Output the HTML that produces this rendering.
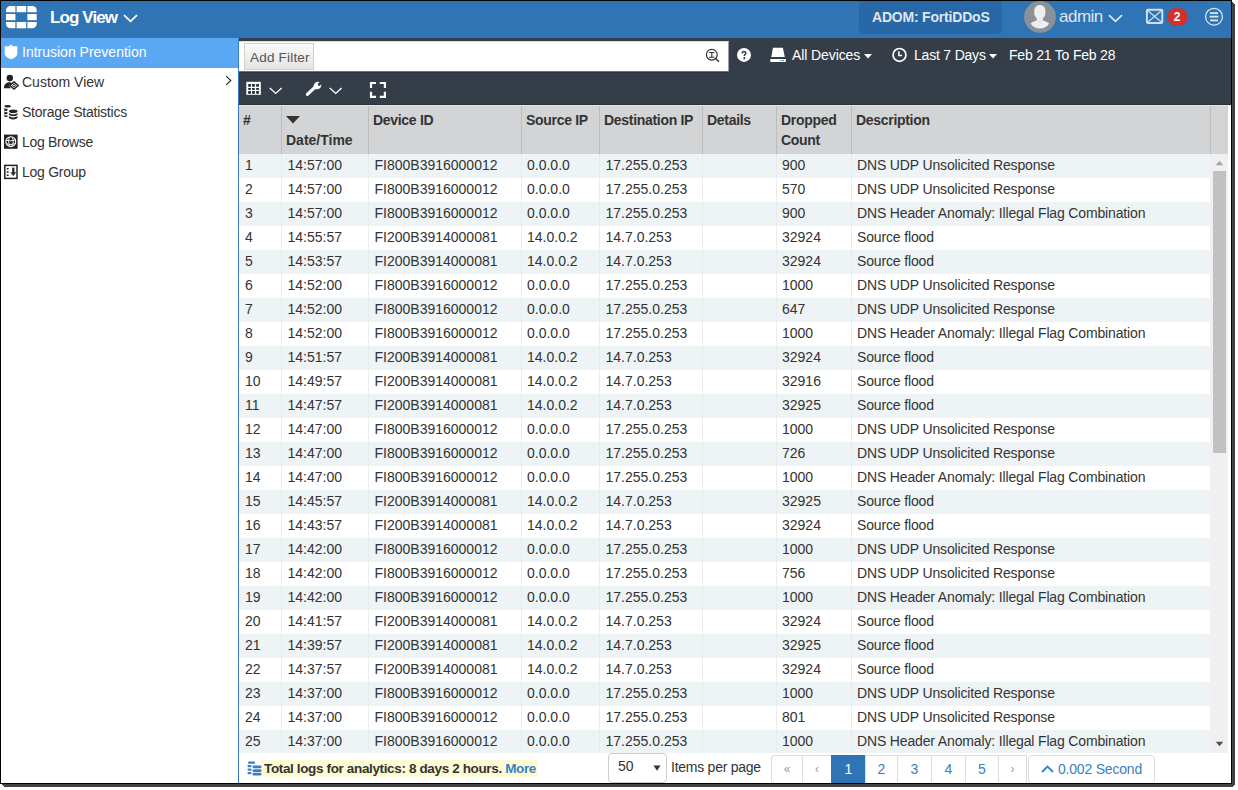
<!DOCTYPE html>
<html>
<head>
<meta charset="utf-8">
<style>
*{box-sizing:border-box;margin:0;padding:0}
html,body{width:1238px;height:790px;overflow:hidden;background:#fff;font-family:"Liberation Sans",sans-serif;color:#333;font-size:14px}
.a{position:absolute}
#shadow{position:absolute;left:3px;top:3px;width:1232px;height:784px;background:#434343}
#win{position:absolute;left:0;top:0;width:1232px;height:784px;background:#fff;overflow:hidden}
#bT,#bL,#bR,#bB{position:absolute;background:#000}
#bT{left:0;top:0;width:1232px;height:1px}
#bB{left:0;top:783px;width:1232px;height:1px}
#bL{left:0;top:0;width:1px;height:784px}
#bR{left:1231px;top:0;width:1px;height:784px}

#hdr{position:absolute;left:1px;top:1px;width:1230px;height:37px;background:#2f74b5}
.ht{position:absolute;white-space:nowrap;line-height:1}
#side{position:absolute;left:1px;top:38px;width:237px;height:745px;background:#fff}
#sideb{position:absolute;left:238px;top:38px;width:1px;height:745px;background:#3a7cc0}
.si{position:absolute;left:1px;width:237px;height:30px;white-space:nowrap}
.si span{position:absolute;left:21px;top:6px;line-height:16px;font-size:14px;color:#333}
.si svg{position:absolute}
#act{background:#5aa8f4}
#act span{color:#fff}

#tb{position:absolute;left:239px;top:38px;width:992px;height:67px;background:#353e48}
#tbl{position:absolute;left:239px;top:104px;width:992px;height:1px;background:#2a323b}
#tbw{position:absolute;left:239px;top:105px;width:992px;height:1px;background:#e4e4e4}
#inp{position:absolute;left:239px;top:41px;width:490px;height:30px;background:#fff;border-top:1px solid #d9d9d9;border-right:1px solid #9aa0a5}
#addf{position:absolute;left:244px;top:43px;width:70px;height:27px;border:1px solid #d0d0d0;border-radius:0;background:linear-gradient(#fafafa,#e4e4e4);color:#555;font-size:13.5px;letter-spacing:0.2px;line-height:27px;padding-left:5px;white-space:nowrap}
.tw{position:absolute;color:#fff;font-size:14px;line-height:16px;white-space:nowrap}

#th{position:absolute;left:239px;top:106px;width:989px;height:48px;background:#d3d4d6}
.hd{position:absolute;top:106px;width:1px;height:48px;background:#bdbdbd}
.htx{position:absolute;font-weight:bold;font-size:14px;line-height:20px;white-space:nowrap;color:#333}

#body{position:absolute;left:239px;top:154px;width:971px;height:599px;overflow:hidden}
.r{position:absolute;left:0;width:971px;height:24px}
.r.odd{background:#eef3f6}
.r span{position:absolute;top:3px;line-height:16px;white-space:nowrap;color:#333;font-size:14px}
.vd{position:absolute;top:0;width:1px;height:599px;background:#e9ecee;z-index:2}
#sb{position:absolute;left:1210px;top:154px;width:18px;height:599px;background:#f0f0f0}
#sbt{position:absolute;left:1213px;top:171px;width:13px;height:282px;background:#c1c1c1}
#strip{position:absolute;left:1228px;top:106px;width:3px;height:677px;background:#fcfcfc}

#foot{position:absolute;left:239px;top:753px;width:992px;height:30px;background:#fff}
.pg{position:absolute;top:755px;height:29px;border:1px solid #ddd;border-right:none;color:#3a80c3;font-size:14px;line-height:26px;text-align:center;background:#fff}
</style>
</head>
<body>
<svg class="a" style="left:0;top:0" width="1238" height="790" viewBox="0 0 1238 790"><path d="M1232 1.5L1235 4.5V784L1232.5 787H4.5L1.5 784Z" fill="#434343" shape-rendering="crispEdges"/></svg>
<div id="win">
  <div id="hdr"></div>
  <!-- logo -->
  <svg class="a" style="left:6px;top:6px" width="31" height="23" viewBox="0 0 31 23">
    <g fill="#fff">
      <path d="M4.5 0H9.4V6.2H0V4.5A4.5 4.5 0 0 1 4.5 0Z"/>
      <rect x="10.6" y="0" width="9.6" height="6.2"/>
      <path d="M21.4 0H26.2A4.5 4.5 0 0 1 30.7 4.5V6.2H21.4Z"/>
      <rect x="0" y="8" width="9.4" height="6.2"/>
      <rect x="21.4" y="8" width="9.3" height="6.2"/>
      <path d="M0 16H9.4V22.3H4.5A4.5 4.5 0 0 1 0 17.8Z"/>
      <rect x="10.6" y="16" width="9.6" height="6.3"/>
      <path d="M21.4 16H30.7V17.8A4.5 4.5 0 0 1 26.2 22.3H21.4Z"/>
    </g>
  </svg>
  <div class="ht" style="left:50px;top:8px;font-size:17px;font-weight:bold;color:#fff;letter-spacing:-0.9px;line-height:20px">Log View</div>
  <svg class="a" style="left:123px;top:14px" width="15" height="9" viewBox="0 0 15 9"><path d="M1 1.2L7.5 7.3L14 1.2" fill="none" stroke="#fff" stroke-width="1.8"/></svg>

  <div class="a" style="left:859px;top:1px;width:143px;height:33px;background:#2968a6;border-radius:0 0 4px 4px"></div>
  <div class="ht" style="left:872px;top:9px;font-size:14px;font-weight:bold;color:#dfe6ee;letter-spacing:-0.2px;line-height:16px">ADOM: FortiDDoS</div>

  <svg class="a" style="left:1024px;top:1px" width="32" height="32" viewBox="0 0 32 32">
    <circle cx="16" cy="16" r="15.9" fill="#8a9198"/>
    <path d="M15.8 4C12.6 4 10.3 6.4 10.3 10C10.3 11.8 10 12.8 10.5 13.8C11 15.3 12 16.8 12.9 17.5V19.4C13.8 20.1 17.8 20.1 18.8 19.4V17.5C19.7 16.8 20.7 15.3 21.2 13.8C21.7 12.8 21.4 11.8 21.4 10C21.4 6.4 19.1 4 15.8 4Z" fill="#eceef0"/>
    <path d="M6.6 22.4C8.8 20.8 11.3 19.8 12.9 19.2C14 20.6 17.6 20.6 18.8 19.2C20.3 19.8 22.8 20.8 25.2 22.4C23.2 25.6 19.6 27.6 15.9 27.6C12.2 27.6 8.7 25.6 6.6 22.4Z" fill="#eceef0"/>
  </svg>
  <div class="ht" style="left:1059px;top:7px;font-size:17px;color:#dfe6ee;letter-spacing:-0.5px;line-height:20px">admin</div>
  <svg class="a" style="left:1108px;top:14px" width="15" height="9" viewBox="0 0 15 9"><path d="M1 1.2L7.5 7.3L14 1.2" fill="none" stroke="#dfe6ee" stroke-width="1.8"/></svg>

  <svg class="a" style="left:1145px;top:8px" width="20" height="17" viewBox="0 0 20 17">
    <rect x="1.9" y="1.8" width="15.4" height="13.1" rx="0.8" fill="none" stroke="#cfdff0" stroke-width="2"/>
    <path d="M2.6 2.5L16.6 14.2M16.6 2.5L2.6 14.2" fill="none" stroke="#cfdff0" stroke-width="1.2"/>
  </svg>
  <div class="a" style="left:1167px;top:8px;width:21px;height:18px;border-radius:9px;background:#d0312d;color:#fff;font-size:12px;font-weight:bold;text-align:center;line-height:18px;padding-right:1px">2</div>
  <svg class="a" style="left:1204px;top:7px" width="20" height="20" viewBox="0 0 20 20">
    <circle cx="10" cy="9.7" r="8.4" fill="none" stroke="#dfe6ee" stroke-width="1.3"/>
    <path d="M6 6.1H14M5.6 9.7H14.4M6 13.3H14" fill="none" stroke="#dfe6ee" stroke-width="1.7"/>
  </svg>

  <!-- sidebar -->
  <div id="side"></div>
  <div id="sideb"></div>
  <div class="si" id="act" style="top:38px">
    <svg style="left:3px;top:6px" width="14" height="16" viewBox="0 0 14 16"><path d="M7 0.6L9.2 2.2H13.4V9.3C13.4 12 11 14.2 7 15.3C3 14.2 0.7 12 0.7 9.3V2.2H4.8Z" fill="#fff"/></svg>
    <span>Intrusion Prevention</span>
  </div>
  <div class="si" style="top:68px">
    <svg style="left:2px;top:6px" width="17" height="17" viewBox="0 0 17 17">
      <ellipse cx="6.8" cy="4.1" rx="3.2" ry="3.3" fill="#222"/>
      <path d="M0.8 14.2C1 10.8 3 8.2 6.4 8.2C7.6 8.2 8.6 8.5 9.3 9L5.6 11.6L8 14.2Z" fill="#222"/>
      <path d="M11 7.9L15.2 11.5L11 15.1L6.8 11.5Z" fill="none" stroke="#222" stroke-width="1.4"/>
      <circle cx="11" cy="11.5" r="1.3" fill="none" stroke="#222" stroke-width="1"/>
    </svg>
    <span>Custom View</span>
    <svg style="left:224px;top:7px" width="7" height="11" viewBox="0 0 7 11"><path d="M1.2 1.2L5.8 5.5L1.2 9.8" fill="none" stroke="#222" stroke-width="1.1"/></svg>
  </div>
  <div class="si" style="top:98px">
    <svg style="left:2px;top:7px" width="16" height="16" viewBox="0 0 16 16">
      <g fill="#222">
        <ellipse cx="4.6" cy="1.2" rx="3.2" ry="1.2"/>
        <path d="M1.2 3.2C1.2 4.8 1.8 5.2 3 5.2H4.5V3.8H3C2.2 3.8 2 3.5 2 3.2Z"/>
        <path d="M1.2 6.6C1.2 8.2 1.8 8.6 3 8.6H4.5V7.2H3C2.2 7.2 2 6.9 2 6.6Z"/>
        <path d="M1.2 10C1.2 11.6 1.8 12 3 12H4.5V10.6H3C2.2 10.6 2 10.3 2 10Z"/>
        <rect x="1.3" y="4.5" width="2.8" height="1.4"/>
        <rect x="1.3" y="7.9" width="2.8" height="1.4"/>
        <ellipse cx="10.2" cy="6.2" rx="4.3" ry="1.8"/>
        <path d="M5.9 7.6C5.9 8.6 7.8 9.4 10.2 9.4C12.6 9.4 14.5 8.6 14.5 7.6V9.2C14.5 10.2 12.6 11 10.2 11C7.8 11 5.9 10.2 5.9 9.2Z"/>
        <path d="M5.9 10.6C5.9 11.6 7.8 12.4 10.2 12.4C12.6 12.4 14.5 11.6 14.5 10.6V12.6C14.5 13.6 12.6 14.4 10.2 14.4C7.8 14.4 5.9 13.6 5.9 12.6Z"/>
      </g>
    </svg>
    <span style="letter-spacing:-0.22px">Storage Statistics</span>
  </div>
  <div class="si" style="top:128px">
    <svg style="left:2px;top:6px" width="16" height="16" viewBox="0 0 16 16">
      <rect x="1" y="0.6" width="13.6" height="14.2" fill="#222"/>
      <circle cx="7.8" cy="7.7" r="4.9" fill="none" stroke="#fff" stroke-width="1.1"/>
      <path d="M3.2 6C5.5 7.2 9.5 7.2 12.4 5.6M3.4 9.6C6 11 10 10.6 12.2 9.3M6.5 3C5 5.5 5.3 10 7.3 12.5M9 2.9C10.8 5.3 10.6 10.2 8.6 12.6" fill="none" stroke="#fff" stroke-width="0.9"/>
    </svg>
    <span style="letter-spacing:-0.3px">Log Browse</span>
  </div>
  <div class="si" style="top:158px">
    <svg style="left:2px;top:6px" width="16" height="16" viewBox="0 0 16 16">
      <rect x="1.8" y="1.4" width="12.2" height="13" fill="none" stroke="#222" stroke-width="1.5"/>
      <path d="M3.8 4.8H5.6M3.8 8H5.6M3.8 11.3H5.6" stroke="#222" stroke-width="1.5"/>
      <path d="M10.3 3.6V8.5" stroke="#222" stroke-width="2.2"/>
      <path d="M7.4 8.2L10.3 11.9L13.2 8.2Z" fill="#222"/>
    </svg>
    <span style="letter-spacing:-0.27px">Log Group</span>
  </div>

  <!-- toolbar -->
  <div id="tb"></div>
  <div id="tbl"></div>
  <div id="tbw"></div>
  <div class="a" style="left:239px;top:71px;width:490px;height:1px;background:#6b7177"></div>
  <div class="a" style="left:239px;top:72px;width:490px;height:1px;background:#2a333c"></div>
  <div id="inp"></div>
  <div id="addf">Add Filter</div>
  <svg class="a" style="left:705px;top:48px" width="16" height="15" viewBox="0 0 16 15">
    <circle cx="6.8" cy="6.7" r="5.4" fill="none" stroke="#333" stroke-width="1.2"/>
    <path d="M10.6 10.6L14 13.8" stroke="#333" stroke-width="1.4"/>
    <path d="M4.2 4.5H9.4M4.2 9.2H9.4" stroke="#333" stroke-width="1.1"/>
    <path d="M6.8 4.5V9.2" stroke="#333" stroke-width="1.1"/>
  </svg>
  <svg class="a" style="left:736px;top:47px" width="16" height="16" viewBox="0 0 16 16">
    <circle cx="8" cy="7.9" r="7" fill="#fff"/>
    <path d="M6.3 6.4C6.3 5.2 7 4.6 8 4.6C9.1 4.6 9.8 5.2 9.8 6.1C9.8 7.4 8.3 7.5 8.3 9" fill="none" stroke="#353e48" stroke-width="1.5"/>
    <rect x="7.5" y="10" width="1.6" height="2.4" fill="#353e48"/>
  </svg>
  <svg class="a" style="left:770px;top:47px" width="17" height="16" viewBox="0 0 17 16">
    <path d="M3 0.8H12.9L14.8 10.1H1.3Z" fill="#fff"/>
    <rect x="0.3" y="12" width="15.5" height="3" fill="#fff"/>
    <rect x="10" y="13" width="1.6" height="1.1" fill="#7fa3c8"/>
    <rect x="12.4" y="13" width="1.6" height="1.1" fill="#4a86c5"/>
  </svg>
  <div class="tw" style="left:792px;top:47px;letter-spacing:-0.1px">All Devices</div>
  <svg class="a" style="left:864px;top:54px" width="8" height="5" viewBox="0 0 8 5"><path d="M0 0H8L4 4.5Z" fill="#fff"/></svg>
  <svg class="a" style="left:891px;top:47px" width="17" height="17" viewBox="0 0 17 17">
    <circle cx="8.5" cy="7.9" r="6.4" fill="none" stroke="#fff" stroke-width="1.7"/>
    <path d="M7.9 4.3V8.6H11.1" fill="none" stroke="#fff" stroke-width="1.5"/>
  </svg>
  <div class="tw" style="left:914px;top:47px;letter-spacing:-0.2px">Last 7 Days</div>
  <svg class="a" style="left:989px;top:54px" width="8" height="5" viewBox="0 0 8 5"><path d="M0 0H8L4 4.5Z" fill="#fff"/></svg>
  <div class="tw" style="left:1009px;top:47px;letter-spacing:-0.2px">Feb 21 To Feb 28</div>

  <!-- toolbar row 2 -->
  <svg class="a" style="left:246px;top:81px" width="16" height="15" viewBox="0 0 16 15">
    <rect x="0.3" y="0.8" width="14.5" height="13" fill="#fff"/>
    <g fill="#1f2a35">
      <rect x="2.2" y="3" width="2.7" height="2.7"/><rect x="6.1" y="3" width="2.7" height="2.7"/><rect x="10.2" y="3" width="2.7" height="2.7"/>
      <rect x="2.2" y="7" width="2.7" height="1.9"/><rect x="6.1" y="7" width="2.7" height="1.9"/><rect x="10.2" y="7" width="2.7" height="1.9"/>
      <rect x="2.2" y="10" width="2.7" height="2.8"/><rect x="6.1" y="10" width="2.7" height="2.8"/><rect x="10.2" y="10" width="2.7" height="2.8"/>
    </g>
  </svg>
  <svg class="a" style="left:269px;top:87px" width="14" height="8" viewBox="0 0 14 8"><path d="M0.8 1L6.7 6.4L12.6 1" fill="none" stroke="#fff" stroke-width="1.4"/></svg>
  <svg class="a" style="left:305px;top:81px" width="17" height="16" viewBox="0 0 17 16">
    <path d="M2.4 13.4L9.6 6.6" stroke="#fff" stroke-width="3.2" stroke-linecap="round"/>
    <path d="M8.6 6.6C8.2 4.2 9.6 1.2 12.6 0.7L14.6 0.9L12.6 2.9L13.3 4.4L14.7 4.9L16.3 3.2C16.6 6.2 14.4 8.5 11.4 8.3L9.8 7.9Z" fill="#fff"/>
  </svg>
  <svg class="a" style="left:329px;top:87px" width="14" height="8" viewBox="0 0 14 8"><path d="M0.8 1L6.7 6.4L12.6 1" fill="none" stroke="#fff" stroke-width="1.4"/></svg>
  <svg class="a" style="left:369px;top:81px" width="18" height="18" viewBox="0 0 18 18">
    <path d="M2 7V2H7M10.8 2H15.9V7M15.9 10.8V15.9H10.8M7 15.9H2V10.8" fill="none" stroke="#fff" stroke-width="2.2"/>
  </svg>

  <!-- table header -->
  <div id="th"></div>
  <div class="hd" style="left:281px"></div>
<div class="hd" style="left:368px"></div>
<div class="hd" style="left:521px"></div>
<div class="hd" style="left:599px"></div>
<div class="hd" style="left:702px"></div>
<div class="hd" style="left:776px"></div>
<div class="hd" style="left:851px"></div>
<div class="hd" style="left:1210px"></div>
  <div class="htx" style="left:243px;top:110px">#</div>
  <svg class="a" style="left:286px;top:116px" width="14" height="8" viewBox="0 0 14 8"><path d="M0 0H14L7 7.5Z" fill="#333"/></svg>
  <div class="htx" style="left:286px;top:130px">Date/Time</div>
  <div class="htx" style="left:373px;top:110px;letter-spacing:-0.3px">Device ID</div>
  <div class="htx" style="left:526px;top:110px;letter-spacing:-0.3px">Source IP</div>
  <div class="htx" style="left:604px;top:110px;letter-spacing:-0.3px">Destination IP</div>
  <div class="htx" style="left:707px;top:110px;letter-spacing:-0.3px">Details</div>
  <div class="htx" style="left:781px;top:110px;letter-spacing:-0.3px">Dropped<br>Count</div>
  <div class="htx" style="left:856px;top:110px;letter-spacing:-0.3px">Description</div>

  <!-- body -->
  <div id="body">
<div class="vd" style="left:42px"></div>
<div class="vd" style="left:129px"></div>
<div class="vd" style="left:282px"></div>
<div class="vd" style="left:360px"></div>
<div class="vd" style="left:463px"></div>
<div class="vd" style="left:537px"></div>
<div class="vd" style="left:612px"></div>
<div class="r odd" style="top:0px"><span style="left:6px">1</span><span style="left:48.5px">14:57:00</span><span style="left:135.5px">FI800B3916000012</span><span style="left:288px">0.0.0.0</span><span style="left:366.5px">17.255.0.253</span><span style="left:543px">900</span><span style="left:618px;letter-spacing:-0.15px">DNS UDP Unsolicited Response</span></div>
<div class="r" style="top:24px"><span style="left:6px">2</span><span style="left:48.5px">14:57:00</span><span style="left:135.5px">FI800B3916000012</span><span style="left:288px">0.0.0.0</span><span style="left:366.5px">17.255.0.253</span><span style="left:543px">570</span><span style="left:618px;letter-spacing:-0.15px">DNS UDP Unsolicited Response</span></div>
<div class="r odd" style="top:48px"><span style="left:6px">3</span><span style="left:48.5px">14:57:00</span><span style="left:135.5px">FI800B3916000012</span><span style="left:288px">0.0.0.0</span><span style="left:366.5px">17.255.0.253</span><span style="left:543px">900</span><span style="left:618px;letter-spacing:-0.15px">DNS Header Anomaly: Illegal Flag Combination</span></div>
<div class="r" style="top:72px"><span style="left:6px">4</span><span style="left:48.5px">14:55:57</span><span style="left:135.5px">FI200B3914000081</span><span style="left:288px">14.0.0.2</span><span style="left:366.5px">14.7.0.253</span><span style="left:543px">32924</span><span style="left:618px;letter-spacing:-0.15px">Source flood</span></div>
<div class="r odd" style="top:96px"><span style="left:6px">5</span><span style="left:48.5px">14:53:57</span><span style="left:135.5px">FI200B3914000081</span><span style="left:288px">14.0.0.2</span><span style="left:366.5px">14.7.0.253</span><span style="left:543px">32924</span><span style="left:618px;letter-spacing:-0.15px">Source flood</span></div>
<div class="r" style="top:120px"><span style="left:6px">6</span><span style="left:48.5px">14:52:00</span><span style="left:135.5px">FI800B3916000012</span><span style="left:288px">0.0.0.0</span><span style="left:366.5px">17.255.0.253</span><span style="left:543px">1000</span><span style="left:618px;letter-spacing:-0.15px">DNS UDP Unsolicited Response</span></div>
<div class="r odd" style="top:144px"><span style="left:6px">7</span><span style="left:48.5px">14:52:00</span><span style="left:135.5px">FI800B3916000012</span><span style="left:288px">0.0.0.0</span><span style="left:366.5px">17.255.0.253</span><span style="left:543px">647</span><span style="left:618px;letter-spacing:-0.15px">DNS UDP Unsolicited Response</span></div>
<div class="r" style="top:168px"><span style="left:6px">8</span><span style="left:48.5px">14:52:00</span><span style="left:135.5px">FI800B3916000012</span><span style="left:288px">0.0.0.0</span><span style="left:366.5px">17.255.0.253</span><span style="left:543px">1000</span><span style="left:618px;letter-spacing:-0.15px">DNS Header Anomaly: Illegal Flag Combination</span></div>
<div class="r odd" style="top:192px"><span style="left:6px">9</span><span style="left:48.5px">14:51:57</span><span style="left:135.5px">FI200B3914000081</span><span style="left:288px">14.0.0.2</span><span style="left:366.5px">14.7.0.253</span><span style="left:543px">32924</span><span style="left:618px;letter-spacing:-0.15px">Source flood</span></div>
<div class="r" style="top:216px"><span style="left:6px">10</span><span style="left:48.5px">14:49:57</span><span style="left:135.5px">FI200B3914000081</span><span style="left:288px">14.0.0.2</span><span style="left:366.5px">14.7.0.253</span><span style="left:543px">32916</span><span style="left:618px;letter-spacing:-0.15px">Source flood</span></div>
<div class="r odd" style="top:240px"><span style="left:6px">11</span><span style="left:48.5px">14:47:57</span><span style="left:135.5px">FI200B3914000081</span><span style="left:288px">14.0.0.2</span><span style="left:366.5px">14.7.0.253</span><span style="left:543px">32925</span><span style="left:618px;letter-spacing:-0.15px">Source flood</span></div>
<div class="r" style="top:264px"><span style="left:6px">12</span><span style="left:48.5px">14:47:00</span><span style="left:135.5px">FI800B3916000012</span><span style="left:288px">0.0.0.0</span><span style="left:366.5px">17.255.0.253</span><span style="left:543px">1000</span><span style="left:618px;letter-spacing:-0.15px">DNS UDP Unsolicited Response</span></div>
<div class="r odd" style="top:288px"><span style="left:6px">13</span><span style="left:48.5px">14:47:00</span><span style="left:135.5px">FI800B3916000012</span><span style="left:288px">0.0.0.0</span><span style="left:366.5px">17.255.0.253</span><span style="left:543px">726</span><span style="left:618px;letter-spacing:-0.15px">DNS UDP Unsolicited Response</span></div>
<div class="r" style="top:312px"><span style="left:6px">14</span><span style="left:48.5px">14:47:00</span><span style="left:135.5px">FI800B3916000012</span><span style="left:288px">0.0.0.0</span><span style="left:366.5px">17.255.0.253</span><span style="left:543px">1000</span><span style="left:618px;letter-spacing:-0.15px">DNS Header Anomaly: Illegal Flag Combination</span></div>
<div class="r odd" style="top:336px"><span style="left:6px">15</span><span style="left:48.5px">14:45:57</span><span style="left:135.5px">FI200B3914000081</span><span style="left:288px">14.0.0.2</span><span style="left:366.5px">14.7.0.253</span><span style="left:543px">32925</span><span style="left:618px;letter-spacing:-0.15px">Source flood</span></div>
<div class="r" style="top:360px"><span style="left:6px">16</span><span style="left:48.5px">14:43:57</span><span style="left:135.5px">FI200B3914000081</span><span style="left:288px">14.0.0.2</span><span style="left:366.5px">14.7.0.253</span><span style="left:543px">32924</span><span style="left:618px;letter-spacing:-0.15px">Source flood</span></div>
<div class="r odd" style="top:384px"><span style="left:6px">17</span><span style="left:48.5px">14:42:00</span><span style="left:135.5px">FI800B3916000012</span><span style="left:288px">0.0.0.0</span><span style="left:366.5px">17.255.0.253</span><span style="left:543px">1000</span><span style="left:618px;letter-spacing:-0.15px">DNS UDP Unsolicited Response</span></div>
<div class="r" style="top:408px"><span style="left:6px">18</span><span style="left:48.5px">14:42:00</span><span style="left:135.5px">FI800B3916000012</span><span style="left:288px">0.0.0.0</span><span style="left:366.5px">17.255.0.253</span><span style="left:543px">756</span><span style="left:618px;letter-spacing:-0.15px">DNS UDP Unsolicited Response</span></div>
<div class="r odd" style="top:432px"><span style="left:6px">19</span><span style="left:48.5px">14:42:00</span><span style="left:135.5px">FI800B3916000012</span><span style="left:288px">0.0.0.0</span><span style="left:366.5px">17.255.0.253</span><span style="left:543px">1000</span><span style="left:618px;letter-spacing:-0.15px">DNS Header Anomaly: Illegal Flag Combination</span></div>
<div class="r" style="top:456px"><span style="left:6px">20</span><span style="left:48.5px">14:41:57</span><span style="left:135.5px">FI200B3914000081</span><span style="left:288px">14.0.0.2</span><span style="left:366.5px">14.7.0.253</span><span style="left:543px">32924</span><span style="left:618px;letter-spacing:-0.15px">Source flood</span></div>
<div class="r odd" style="top:480px"><span style="left:6px">21</span><span style="left:48.5px">14:39:57</span><span style="left:135.5px">FI200B3914000081</span><span style="left:288px">14.0.0.2</span><span style="left:366.5px">14.7.0.253</span><span style="left:543px">32925</span><span style="left:618px;letter-spacing:-0.15px">Source flood</span></div>
<div class="r" style="top:504px"><span style="left:6px">22</span><span style="left:48.5px">14:37:57</span><span style="left:135.5px">FI200B3914000081</span><span style="left:288px">14.0.0.2</span><span style="left:366.5px">14.7.0.253</span><span style="left:543px">32924</span><span style="left:618px;letter-spacing:-0.15px">Source flood</span></div>
<div class="r odd" style="top:528px"><span style="left:6px">23</span><span style="left:48.5px">14:37:00</span><span style="left:135.5px">FI800B3916000012</span><span style="left:288px">0.0.0.0</span><span style="left:366.5px">17.255.0.253</span><span style="left:543px">1000</span><span style="left:618px;letter-spacing:-0.15px">DNS UDP Unsolicited Response</span></div>
<div class="r" style="top:552px"><span style="left:6px">24</span><span style="left:48.5px">14:37:00</span><span style="left:135.5px">FI800B3916000012</span><span style="left:288px">0.0.0.0</span><span style="left:366.5px">17.255.0.253</span><span style="left:543px">801</span><span style="left:618px;letter-spacing:-0.15px">DNS UDP Unsolicited Response</span></div>
<div class="r odd" style="top:576px"><span style="left:6px">25</span><span style="left:48.5px">14:37:00</span><span style="left:135.5px">FI800B3916000012</span><span style="left:288px">0.0.0.0</span><span style="left:366.5px">17.255.0.253</span><span style="left:543px">1000</span><span style="left:618px;letter-spacing:-0.15px">DNS Header Anomaly: Illegal Flag Combination</span></div>
  </div>
  <div id="sb"></div>
  <svg class="a" style="left:1215px;top:160px" width="9" height="6" viewBox="0 0 9 6"><path d="M0.8 5.2H8.2L4.5 0.8Z" fill="#a3a3a3"/></svg>
  <div id="sbt"></div>
  <svg class="a" style="left:1215px;top:741px" width="9" height="6" viewBox="0 0 9 6"><path d="M0.8 0.8H8.2L4.5 5.2Z" fill="#505050"/></svg>
  <div id="strip"></div>

  <!-- footer -->
  <div id="foot"></div>
  <div class="a" style="left:261px;top:760px;width:277px;height:17px;background:#fdfbd3"></div>
  <svg class="a" style="left:247px;top:761px" width="15" height="15" viewBox="0 0 15 15">
    <g fill="#3a7fc0">
      <rect x="1" y="0.5" width="7" height="2.2" rx="1"/>
      <rect x="0.5" y="4" width="4" height="2.2" rx="1"/>
      <rect x="0.5" y="7.5" width="4" height="2.2" rx="1"/>
      <rect x="0.5" y="11" width="4" height="2.2" rx="1"/>
      <rect x="5.5" y="4.5" width="9" height="2.8" rx="1.3"/>
      <rect x="5.5" y="8.2" width="9" height="2.8" rx="1.3"/>
      <rect x="5.5" y="11.8" width="9" height="2.8" rx="1.3"/>
    </g>
  </svg>
  <div class="ht" style="left:264px;top:761px;font-size:13.5px;font-weight:bold;color:#333;line-height:16px;letter-spacing:-0.36px">Total logs for analytics: 8 days 2 hours. <span style="color:#3a80c3;font-weight:bold">More</span></div>

  <div class="a" style="left:608px;top:753px;width:59px;height:30px;border:1px solid #ccc;border-radius:4px;background:#fff"></div>
  <div class="ht" style="left:618px;top:758px;font-size:14px;color:#333;line-height:16px">50</div>
  <svg class="a" style="left:653px;top:765px" width="8" height="6" viewBox="0 0 8 6"><path d="M0.5 0.5H7.5L4 5.8Z" fill="#333"/></svg>
  <div class="ht" style="left:671px;top:759px;font-size:14px;color:#333;line-height:16px;letter-spacing:-0.25px">Items per page</div>

  <div class="pg" style="left:771px;width:31px;border-radius:4px 0 0 4px;color:#999;font-size:12px">&laquo;</div>
  <div class="pg" style="left:802px;width:29px;color:#999;font-size:12px">&lsaquo;</div>
  <div class="pg" style="left:831px;width:34px;background:#2f74b5;border-color:#2f74b5;color:#fff">1</div>
  <div class="pg" style="left:865px;width:32px">2</div>
  <div class="pg" style="left:897px;width:34px">3</div>
  <div class="pg" style="left:931px;width:34px">4</div>
  <div class="pg" style="left:965px;width:33px">5</div>
  <div class="pg" style="left:998px;width:29px;border-right:1px solid #ddd;color:#999;font-size:12px">&rsaquo;</div>
  <div class="pg" style="left:1028px;width:127px;border:1px solid #ddd;border-radius:4px;text-align:left;padding-left:29px;letter-spacing:-0.2px">0.002 Second</div>
  <svg class="a" style="left:1041px;top:765px" width="13" height="8" viewBox="0 0 13 8"><path d="M1 7L6.5 1.5L12 7" fill="none" stroke="#3a80c3" stroke-width="1.8"/></svg>

  <div id="bT"></div><div id="bL"></div><div id="bR"></div><div id="bB"></div>
</div>
</body>
</html>
